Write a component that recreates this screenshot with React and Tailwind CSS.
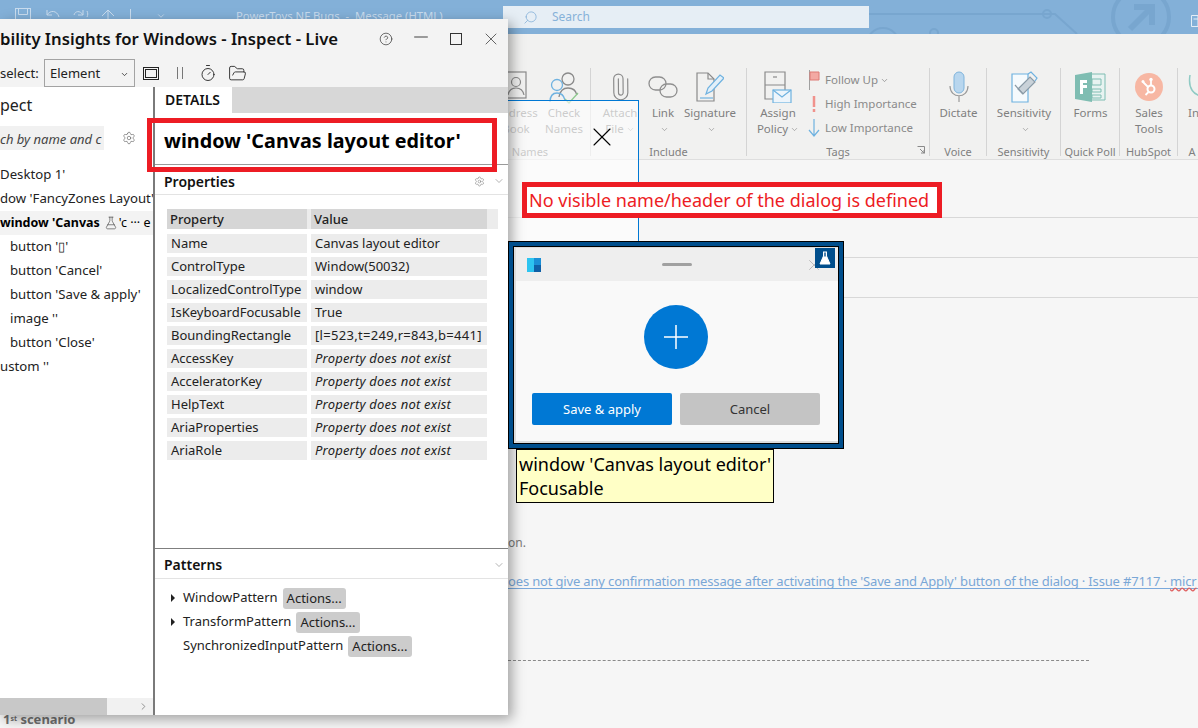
import { ChevronDown, ChevronRight, CircleHelp, FlaskConical, FolderOpen, Minus, Paperclip, Search, Settings, Timer, X } from 'lucide-react'

const RibbonBtn = ({width, icon, lines, chevron}) => (
  <div className="flex flex-col items-center shrink-0 text-[#7f7f7f]" style={{width}}>
    <div className="h-[36px] flex items-center justify-center mt-[1px]">{icon}</div>
    <div className="text-[11.5px] leading-[16px] whitespace-nowrap text-center">{lines[0]}</div>
    <div className="text-[11.5px] leading-[16px] whitespace-nowrap text-center flex items-center justify-center h-[16px]">
      {lines[1]}
      {chevron && <ChevronDown size={9} strokeWidth={1.5} className="ml-[2px]" />}
    </div>
  </div>
)

const Group = ({width, label, children, noBorder, pad = 0}) => (
  <div className={`relative shrink-0 h-[88px] flex ${noBorder ? '' : 'border-r border-[#d4d4d4]'}`} style={{width, paddingLeft: pad}}>
    {children}
    <div className="absolute left-0 right-0 top-[76px] text-center text-[11px] leading-[16px] whitespace-nowrap text-[#7f7f7f]">{label}</div>
  </div>
)

const Ribbon = () => (
  <div className="h-[126px] bg-[#f1f1f0] border-b border-[#dedede] pt-[34px] pl-[470px] flex overflow-hidden">
    <Group width={121} label="Names" pad={22}>
      <RibbonBtn width={48} lines={['Address', 'Book']} icon={
        <svg width="22" height="32" viewBox="0 0 22 32" fill="none" stroke="#8a8a8a" strokeWidth="1.2"><rect x="1" y="1" width="20" height="26" /><circle cx="11" cy="11" r="4.5" /><path d="M3 24c1-5 4-7 8-7s7 2 8 7" /></svg>
      } />
      <RibbonBtn width={48} lines={['Check', 'Names']} icon={
        <svg width="32" height="34" viewBox="0 0 32 34" fill="none" strokeWidth="1.3"><circle cx="20" cy="9" r="6" stroke="#8a8a8a" /><path d="M11 27c1-6 4-9 9-9s8 3 9 7" stroke="#8a8a8a" /><circle cx="9" cy="15" r="5.5" stroke="#6fb2e0" /><path d="M2 32c0-6 3-9 7-9s7 3 8 7" stroke="#6fb2e0" /><path d="M17 29l4 4 9-10" stroke="#8fca8f" /></svg>
      } />
    </Group>
    <Group width={156} label="Include" pad={7}>
      <RibbonBtn width={44} chevron lines={['Attach', 'File']} icon={<Paperclip size={28} strokeWidth={1} className="text-[#8a8a8a] -rotate-45" />} />
      <RibbonBtn width={42} chevron lines={['Link', '']} icon={
        <svg width="30" height="24" viewBox="0 0 30 24" fill="none" stroke="#8f8f8f" strokeWidth="1.3"><rect x="1" y="2" width="17" height="13" rx="6.5" /><rect x="12" y="9" width="17" height="13" rx="6.5" /></svg>
      } />
      <RibbonBtn width={52} chevron lines={['Signature', '']} icon={
        <svg width="28" height="30" viewBox="0 0 28 30" fill="none" strokeWidth="1.2"><path d="M1 1h11l6 6v22H1z" stroke="#8a8a8a" /><path d="M12 1v6h6" stroke="#8a8a8a" /><path d="M10 22l2-6L24 3l4 3-12 13z" stroke="#6fb2e0" fill="#e3f0f9" /><path d="M4 26h13" stroke="#6fb2e0" /></svg>
      } />
    </Group>
    <Group width={183} label="Tags" pad={3}>
      <RibbonBtn width={56} chevron lines={['Assign', 'Policy']} icon={
        <svg width="28" height="32" viewBox="0 0 28 32" fill="none" strokeWidth="1.2"><path d="M9 28H1V1h20v18M1 14h20" stroke="#8a8a8a" /><path d="M9 6h4" stroke="#8a8a8a" /><rect x="9" y="19" width="18" height="13" fill="#eef5fb" stroke="#6fb2e0" /><path d="M9 19l9 7 9-7" stroke="#6fb2e0" /></svg>
      } />
      <div className="flex flex-col pl-[2px] text-[11.5px] text-[#8a8a8a]">
        <div className="h-[24px] flex items-center gap-[5px] whitespace-nowrap">
          <svg width="12" height="20" viewBox="0 0 12 20" fill="none"><path d="M1.500 0v20" stroke="#a0a0a0" /><path d="M2 2h9v8H2z" fill="#f3a9a3" stroke="#de7a74" /></svg>
          <span className="flex items-center">Follow Up<ChevronDown size={9} className="ml-[2px]" /></span>
        </div>
        <div className="h-[24px] flex items-center gap-[5px] whitespace-nowrap">
          <svg width="12" height="20" viewBox="0 0 12 20" fill="none"><path d="M6 2v11" stroke="#f0928c" strokeWidth="2.500" /><path d="M6 15v3" stroke="#f0928c" strokeWidth="2.500" /></svg>
          <span>High Importance</span>
        </div>
        <div className="h-[24px] flex items-center gap-[5px] whitespace-nowrap">
          <svg width="12" height="20" viewBox="0 0 12 20" fill="none"><path d="M6 1v17M1 12l5 6 5-6" stroke="#6fb2e0" strokeWidth="1.200" /></svg>
          <span>Low Importance</span>
        </div>
      </div>
      <svg className="absolute right-[4px] top-[78px]" width="8" height="8" viewBox="0 0 8 8" fill="none" stroke="#8a8a8a"><path d="M.5.500h7v7M3 3l4 4M7 4v3H4" /></svg>
    </Group>
    <Group width={57} label="Voice">
      <RibbonBtn width={57} lines={['Dictate', '']} icon={
        <svg width="20" height="32" viewBox="0 0 20 32" fill="none"><rect x="5" y="1" width="10" height="21" rx="5" fill="#b8d6ee" stroke="#7fb4dc" /><path d="M1 15c0 13 18 13 18 0M10 25v6" stroke="#9a9a9a" strokeWidth="1.200" /></svg>
      } />
    </Group>
    <Group width={74} label="Sensitivity">
      <RibbonBtn width={74} chevron lines={['Sensitivity', '']} icon={
        <svg width="28" height="32" viewBox="0 0 28 32" fill="none" strokeWidth="1.2"><path d="M2 3h16v28H2z" stroke="#6fb2e0" fill="#f5fafd" /><path d="M8 18l12-12 5 5-12 12z" fill="#c9d2d9" stroke="#8a9aa6" /><path d="M18 3l3-2 6 6-2 3" stroke="#6fb2e0" /><path d="M5 14l8 9" stroke="#8a9aa6" /></svg>
      } />
    </Group>
    <Group width={59} label="Quick Poll">
      <RibbonBtn width={59} lines={['Forms', '']} icon={
        <svg width="32" height="32" viewBox="0 0 32 32" fill="none"><path d="M13 3h17v26H13z" fill="#e8f3f1" stroke="#7fbdb2" /><path d="M17 8h9v6h-9zM17 18h9v3h-9zM17 24h9v3h-9z" stroke="#7fbdb2" /><path d="M0 4l17-3v30L0 28z" fill="#7fbdb2" /><path d="M5 9h7v3H8v2h4v3H8v6H5z" fill="#ffffff" /></svg>
      } />
    </Group>
    <Group width={58} label="HubSpot">
      <RibbonBtn width={58} lines={['Sales', 'Tools']} icon={
        <svg width="28" height="30" viewBox="0 0 28 30"><circle cx="14" cy="15" r="14" fill="#f7b7a3" /><circle cx="16" cy="17" r="3.500" fill="none" stroke="#ffffff" strokeWidth="2" /><path d="M16 13V8M13 15L8 10M13.500 20l-3 3" stroke="#ffffff" strokeWidth="1.800" /><circle cx="16" cy="7.500" r="1.700" fill="#ffffff" /><circle cx="8" cy="9.500" r="1.500" fill="#ffffff" /></svg>
      } />
    </Group>
    <Group width={28} label="A" noBorder>
      <div className="pl-[10px] text-[#7f7f7f]">
        <div className="h-[36px] flex items-center mt-[1px]"><svg width="20" height="28" viewBox="0 0 20 28" fill="none"><path d="M2 2c-2 12 2 22 18 22" stroke="#8fcac4" strokeWidth="1.500" /></svg></div>
        <div className="text-[11.5px] leading-[16px]">In</div>
      </div>
    </Group>
  </div>
)

const TitleBar = () => (
  <div className="relative h-[34px] bg-[#83b0d8] flex items-start overflow-hidden">
    <div className="flex items-center h-[32px] pl-[15px] text-[#c9dcee]">
      <svg width="16" height="16" viewBox="0 0 16 16" fill="none" stroke="currentColor"><rect x=".5" y=".5" width="15" height="15" /><path d="M3.500.500v6h9v-6" /></svg>
      <svg className="ml-[14px]" width="15" height="14" viewBox="0 0 15 14" fill="none" stroke="currentColor"><path d="M2 1v5h5M2 6c3-5 10-5 12 2" /></svg>
      <svg className="ml-[13px]" width="16" height="14" viewBox="0 0 16 14" fill="none" stroke="currentColor"><path d="M10 1v5H5M10 6C7 1 2 2 1 6M14 2c1 2 1 4 0 6" /></svg>
      <svg className="ml-[12px]" width="14" height="14" viewBox="0 0 14 14" fill="none" stroke="currentColor"><path d="M7 14V1M1 7l6-6 6 6" /></svg>
      <div className="ml-[15px] w-px h-[14px] bg-[#c9dcee]" />
      <ChevronDown size={10} className="ml-[25px]" />
      <div className="ml-[70px] text-[11.3px] leading-[16px] whitespace-pre">PowerToys NF Bugs  -  Message (HTML)</div>
    </div>
    <div className="absolute left-[503px] top-[6px] w-[366px] h-[22px] bg-[#e6eef5] flex items-center pl-[20px] text-[#86b2d9] text-[12px]">
      <Search size={15} strokeWidth={1.3} className="-scale-x-100" />
      <span className="ml-[14px]">Search</span>
    </div>
    <svg className="absolute left-[869px] top-0" width="329" height="34" viewBox="0 0 329 34" fill="none" stroke="#78a6cf" strokeWidth="2">
      <path d="M0 14h172l14 0 22 20" />
      <circle cx="178" cy="14" r="4" />
      <circle cx="14" cy="44" r="16" />
      <circle cx="65" cy="33" r="4" />
      <circle cx="272" cy="17" r="28" strokeWidth="4" />
      <path d="M261 29l22-22M265 7h18v18" strokeWidth="6" />
    </svg>
    <svg className="absolute left-[1191px] top-[15px]" width="7" height="13" viewBox="0 0 7 13" fill="none" stroke="#e4eef7"><path d="M.5.500H7v11H.5zM2.500 4H7" /></svg>
  </div>
)

const Body = () => (
  <div className="relative flex-1 bg-[#f6f6f6] overflow-hidden">
    <div className="mt-[57px] border-t border-[#d8d8d8]" />
    <div className="mt-[39px] border-t border-[#d8d8d8]" />
    <div className="mt-[39px] border-t border-[#d8d8d8]" />
    <div className="mt-[237px] pl-[508px] text-[12px] leading-[16px] text-[#7a7a7a]">on.</div>
    <div className="mt-[21px] ml-[508px] h-[17px] border-b border-[#7aa9dc] text-[13px] leading-[19px] text-[#7aa7d6] whitespace-nowrap tracking-[-0.16px]">
      oes not give any confirmation message after activating the 'Save and Apply' button of the dialog · Issue #7117 · <span className="underline decoration-wavy decoration-[#e06060]">micr</span>
    </div>
    <div className="mt-[71px] ml-[508px] w-[581px] border-t border-dashed border-[#8a8a8a]" />
    <div className="mt-[50px] pl-[3px] text-[13px] leading-[16px] font-bold text-[#6f6f6f]">1<sup className="text-[7px]">st</sup> scenario</div>
  </div>
)

const treeRows = [
  {text: "Desktop 1'", pl: 0},
  {text: "dow 'FancyZones Layout'", pl: 0},
  {text: 'selected', pl: 0},
  {text: "button '▯'", pl: 10},
  {text: "button 'Cancel'", pl: 10},
  {text: "button 'Save & apply'", pl: 10},
  {text: "image ''", pl: 10},
  {text: "button 'Close'", pl: 10},
  {text: "ustom ''", pl: 0},
]

const TreePane = () => (
  <div className="relative w-[153px] shrink-0 bg-white flex flex-col overflow-hidden">
    <div className="h-[37px] flex items-center text-[16px] text-[#222] pb-[1px]">pect</div>
    <div className="flex items-center h-[24px] mt-[2px]">
      <div className="w-[104px] h-[24px] bg-[#f1f1f1] text-[13px] italic leading-[26px] text-[#444] overflow-hidden whitespace-nowrap">ch by name and c</div>
      <Settings size={14} strokeWidth={1} className="ml-[18px] text-[#555]" />
    </div>
    <div className="mt-[13px]">
      {treeRows.map((r, i) => r.text === 'selected' ? (
        <div key={i} className="h-[24px] bg-[#f3f3f3] flex items-center text-[12.5px] font-bold text-black whitespace-nowrap overflow-hidden">
          window 'Canvas
          <FlaskConical size={14} strokeWidth={1} className="ml-[4px] text-[#333] shrink-0" />
          <span className="ml-[1px] font-normal">'c ··· e</span>
        </div>
      ) : (
        <div key={i} className="h-[24px] flex items-center text-[13.2px] text-[#222] whitespace-nowrap overflow-hidden" style={{paddingLeft: r.pl}}>{r.text}</div>
      ))}
    </div>
    <div className="mt-auto h-[17px] bg-[#f1f1f1] flex items-center shrink-0">
      <div className="w-[107px] h-full bg-[#c8c8c8]" />
      <ChevronRight size={11} className="ml-auto mr-[4px] text-[#888]" />
    </div>
  </div>
)

const props = [
  ['Name', 'Canvas layout editor'],
  ['ControlType', 'Window(50032)'],
  ['LocalizedControlType', 'window'],
  ['IsKeyboardFocusable', 'True'],
  ['BoundingRectangle', '[l=523,t=249,r=843,b=441]'],
  ['AccessKey', 'Property does not exist', true],
  ['AcceleratorKey', 'Property does not exist', true],
  ['HelpText', 'Property does not exist', true],
  ['AriaProperties', 'Property does not exist', true],
  ['AriaRole', 'Property does not exist', true],
]

const PropsTable = () => (
  <div className="mt-[14px] ml-[12px] text-[13px] text-[#222]">
    <div className="flex w-[331px] h-[20px] bg-[#ececec] mb-[5px] font-medium">
      <div className="w-[140px] bg-[#d6d6d6] pl-[3px] leading-[20px]">Property</div>
      <div className="w-[176px] ml-[4px] bg-[#d6d6d6] pl-[3px] leading-[20px]">Value</div>
    </div>
    {props.map(([k, v, it]) => (
      <div key={k} className="flex h-[19px] mb-[4px]">
        <div className="w-[140px] bg-[#ececec] pl-[4px] leading-[19px] whitespace-nowrap overflow-hidden">{k}</div>
        <div className={`w-[176px] ml-[4px] bg-[#ececec] pl-[4px] leading-[19px] whitespace-nowrap overflow-hidden ${it ? 'italic tracking-[0.2px]' : ''} ${k === 'BoundingRectangle' ? 'tracking-[0.3px]' : ''}`}>{v}</div>
      </div>
    ))}
  </div>
)

const patterns = [
  ['WindowPattern', true],
  ['TransformPattern', true],
  ['SynchronizedInputPattern', false],
]

const DetailsPane = () => (
  <div className="relative flex-1 min-w-0 bg-white flex flex-col border-l-2 border-[#7a7a7a]">
    <div className="h-[26px] bg-[#d7d7d7] flex shrink-0">
      <div className="w-[77px] bg-white text-[14px] font-semibold text-[#111] leading-[26px] pl-[10px]">DETAILS</div>
    </div>
    <div className="h-[52px] shrink-0 border-b border-[#9a9a9a] pl-[9px] flex items-center text-[19.75px] font-bold text-black whitespace-nowrap pt-[4px]">window 'Canvas layout editor'</div>
    <div className="h-[30px] shrink-0 border-b border-[#e3e3e3] flex items-center pl-[9px] pt-[3px] text-[14px] font-semibold text-[#111]">
      Properties
      <Settings size={11} strokeWidth={1} className="ml-auto text-[#666]" />
      <ChevronDown size={12} strokeWidth={1} className="ml-[8px] mr-[3px] text-[#666]" />
    </div>
    <PropsTable />
    <div className="absolute left-0 right-0 top-[461px] border-t border-[#7f7f7f]">
      <div className="h-[30px] border-b border-[#e3e3e3] flex items-center pl-[9px] pt-[2px] text-[14px] font-semibold text-[#111]">
        Patterns
        <ChevronDown size={12} strokeWidth={1} className="ml-auto mr-[3px] text-[#666]" />
      </div>
      <div className="pt-[7px]">
        {patterns.map(([name, arrow]) => (
          <div key={name} className="h-[24px] flex items-center text-[13px] text-[#222]">
            <div className="w-[28px] pl-[15px] shrink-0">
              {arrow && <svg width="6" height="8" viewBox="0 0 6 8"><path d="M1 0l4 4-4 4z" fill="#222" /></svg>}
            </div>
            <span className="whitespace-nowrap">{name}</span>
            <span className="ml-[5px] h-[21px] px-[4px] rounded-[3px] bg-[#cccccc] leading-[21px] whitespace-nowrap">Actions...</span>
          </div>
        ))}
      </div>
    </div>
    <div className="absolute left-[-8px] top-[31px] w-[350px] h-[54px] border-[5px] border-[#ed1c24]" />
  </div>
)

const InspectWindow = () => (
  <div className="absolute left-0 top-[19px] w-[508px] h-[696px] bg-[#f3f3f3] flex flex-col shadow-[4px_4px_12px_rgba(0,0,0,0.35)]">
    <div className="h-[40px] shrink-0 flex items-center">
      <div className="text-[16.7px] font-semibold text-[#111] whitespace-nowrap">bility Insights for Windows - Inspect - Live</div>
      <CircleHelp size={14} strokeWidth={1.2} className="absolute left-[379px] top-[13px] text-[#333]" />
      <Minus size={22} strokeWidth={0.8} className="absolute left-[410px] top-[7px] text-black" />
      <div className="absolute left-[450px] top-[14px] w-[12px] h-[12px] border border-[#333]" />
      <X size={20} strokeWidth={0.9} className="absolute left-[481px] top-[10px] text-[#333]" />
    </div>
    <div className="h-[28px] shrink-0 flex items-center text-[13px] text-[#222]">
      <span className="w-[44px] pt-[2px]">select:</span>
      <div className="w-[91px] h-[28px] border border-[#a3a3a3] flex items-center pl-[5px] pt-[2px] bg-[#f3f3f3]">
        Element
        <ChevronDown size={9} className="ml-auto mr-[5px]" />
      </div>
      <svg className="ml-[8px]" width="16" height="13" viewBox="0 0 16 13" fill="none" stroke="#222"><rect x=".5" y=".5" width="15" height="12" /><rect x="2.500" y="2.500" width="11" height="8" /></svg>
      <svg className="ml-[17px]" width="8" height="12" viewBox="0 0 8 12" fill="none" stroke="#777"><path d="M1.500 0v12M6.500 0v12" /></svg>
      <Timer size={18} strokeWidth={1.2} className="ml-[15px] text-[#222]" />
      <FolderOpen size={19} strokeWidth={1.1} className="ml-[11px] text-[#222]" />
    </div>
    <div className="flex-1 min-h-0 flex">
      <TreePane />
      <DetailsPane />
    </div>
  </div>
)

const Dialog = () => (
  <div className="absolute left-[508px] top-[241px] w-[336px] h-[208px] border border-black bg-[#004e8c] p-[4px]">
    <div className="relative h-full border border-black bg-[#dcdcdc] pb-[2px] pt-[1px]">
      <div className="h-full bg-[#f9f9f9] ml-[2px] flex flex-col">
        <div className="relative h-[33px] bg-[#eeeeee] flex items-center justify-center shrink-0">
          <svg className="absolute left-[11px] top-[10px]" width="14" height="14" viewBox="0 0 14 14"><rect width="7" height="14" fill="#2dc4f0" /><rect x="7" width="7" height="7" fill="#1b8fd6" /><rect x="7" y="7" width="7" height="7" fill="#0f5fa6" /></svg>
          <div className="w-[30px] h-[3px] rounded-full bg-[#a0a0a0] -mt-[1px]" />
          <X size={18} strokeWidth={0.8} className="absolute right-[15px] top-[8px] text-[#999]" />
        </div>
        <div className="flex justify-center mt-[24px] pr-[2px]">
          <div className="w-[64px] h-[64px] rounded-full bg-[#0078d4] flex items-center justify-center">
            <svg width="24" height="24" viewBox="0 0 24 24" stroke="#ffffff" strokeWidth="1.500"><path d="M12 0v24M0 12h24" /></svg>
          </div>
        </div>
        <div className="flex gap-[8px] pl-[16px] mt-[24px] text-[13px] leading-[32px] text-center">
          <div className="w-[140px] h-[32px] rounded-[2px] bg-[#0078d4] text-white">Save &amp; apply</div>
          <div className="w-[140px] h-[32px] rounded-[2px] bg-[#c4c4c4] text-[#333]">Cancel</div>
        </div>
      </div>
    </div>
    <div className="absolute left-[306px] top-[6px] w-[20px] h-[20px] bg-[#004e8c] flex items-center justify-center">
      <svg width="12" height="14" viewBox="0 0 12 14"><path d="M4 1h4M4.500 1v4L1 13h10L7.500 5V1" fill="#ffffff" stroke="#ffffff" strokeWidth="1" /><path d="M5.300 1.500v4h1.400v-4z" fill="#004e8c" /></svg>
    </div>
  </div>
)

const App = () => (
  <div className="relative w-[1198px] h-[728px] overflow-hidden flex flex-col font-['Noto_Sans',sans-serif]">
    <TitleBar />
    <Ribbon />
    <Body />

    {/* highlight rectangle from the inspected element */}
    <div className="absolute left-[508px] top-[100px] w-[131px] h-[150px] bg-white/60 border-t border-r border-[#0078d4]">
      <X size={32} strokeWidth={0.8} className="absolute left-[78px] top-[20px] text-black" />
    </div>

    <InspectWindow />
    <Dialog />

    <div className="absolute left-[522px] top-[182px] w-[420px] h-[36px] border-[5px] border-[#ed1c24] bg-white text-[#ed1c24] text-[18px] leading-[26px] pl-[2px] whitespace-nowrap">No visible name/header of the dialog is defined</div>

    <div className="absolute left-[516px] top-[449px] w-[258px] h-[54px] bg-[#ffffc6] border border-black text-black text-[18px] leading-[24px] pl-[2px] pt-[2px] whitespace-nowrap">
      <div>window 'Canvas layout editor'</div>
      <div>Focusable</div>
    </div>
  </div>
)

export default App
